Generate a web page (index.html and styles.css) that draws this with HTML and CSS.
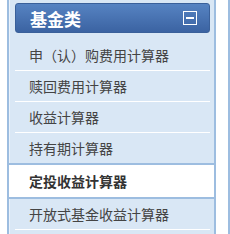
FILE: index.html
```html
<!DOCTYPE html>
<html lang="zh">
<head>
  <meta charset="UTF-8" />
  <title>基金类计算器</title>
  <link rel="stylesheet" href="styles.css">
</head>
<body>
  <div class="pagina">
    <!-- Menu lateral -->
    <div class="menu">
      <div class="menu-titulo">
        <span>基金类</span>
        <span class="icono-menos"></span>
      </div>
      <ul class="lista">
        <li>申（认）购费用计算器</li>
        <li>赎回费用计算器</li>
        <li>收益计算器</li>
        <li class="ultimo">持有期计算器</li>
        <li class="activo">定投收益计算器</li>
        <li>开放式基金收益计算器</li>
      </ul>
    </div>
    <div class="siguiente"></div>
  </div>
</body>
</html>
```
FILE: styles.css
```css
body {
  margin: 0;
  background-color: #fff;
  font-family: "Noto Sans CJK SC", "DejaVu Sans", sans-serif;
}

.pagina {
  display: flex;
  height: 234px;
  overflow: hidden;
}

.menu {
  margin-left: 7px;
  width: 204px;
  padding: 3px 4px 0 6px;
  background-color: #d9e7f5;
  border-left: 2px solid #9dbde0;
  border-right: 2px solid #9dbde0;
  box-shadow: inset 1px 0 0 #eaf2fb;
}

.menu-titulo {
  display: flex;
  align-items: center;
  justify-content: space-between;
  height: 28px;
  padding: 0 12px 0 14px;
  border: 1px solid #3a609a;
  border-radius: 3px;
  background: linear-gradient(#5683c2, #3b63a2);
  color: #fff;
  font-size: 17px;
  font-weight: bold;
}

.icono-menos {
  width: 12px;
  height: 12px;
  border: 1px solid #fff;
  display: flex;
  align-items: center;
  justify-content: center;
}

.icono-menos::after {
  content: "";
  width: 8px;
  height: 2px;
  background-color: #fff;
}

.lista {
  list-style: none;
  margin: 7px 0 0;
  padding: 0;
}

.lista li {
  height: 30px;
  line-height: 30px;
  padding-left: 14px;
  font-size: 14px;
  color: #444;
  border-bottom: 1px solid #fff;
  white-space: nowrap;
}

.lista li.ultimo {
  border-bottom: none;
}

.lista li.activo {
  height: 32px;
  line-height: 32px;
  margin: 0 -4px 0 -6px;
  padding-left: 20px;
  background-color: #fff;
  border-top: 2px solid #9dbde0;
  border-bottom: 2px solid #9dbde0;
  color: #333;
  font-weight: bold;
}

.siguiente {
  margin-left: 12px;
  flex: 1;
  background-color: #d9e7f5;
  border-left: 2px solid #9dbde0;
}
```
